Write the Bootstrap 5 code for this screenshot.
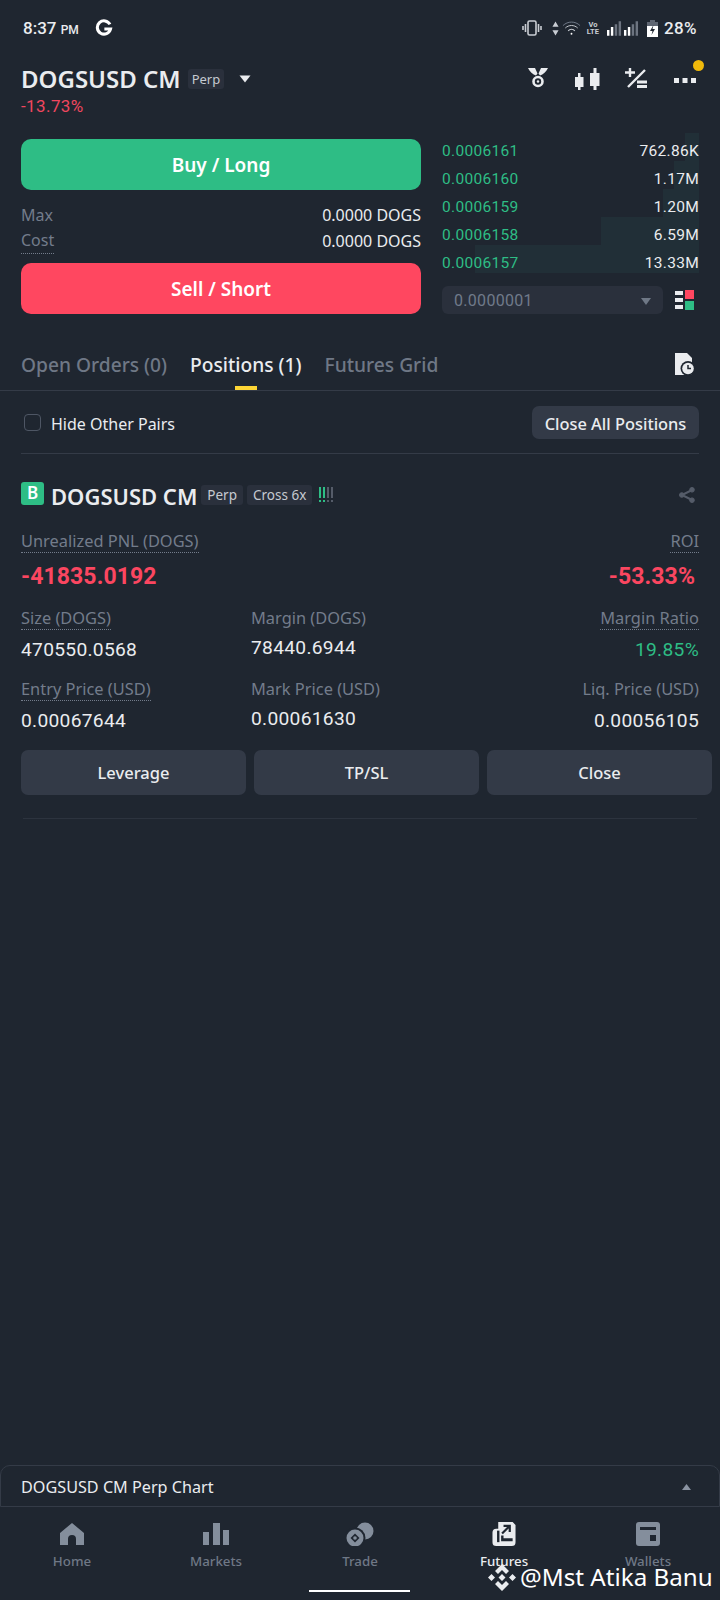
<!DOCTYPE html>
<html lang="en">
<head>
  <meta charset="UTF-8">
  <title>DOGSUSD CM Perp</title>
  <link href="https://cdn.jsdelivr.net/npm/bootstrap@5.3.3/dist/css/bootstrap.min.css" rel="stylesheet">
  <style>
    html, body { background: #1f2630; }
    body { font-family: "Noto Sans", sans-serif; color: #eaecef; }
    .app { width: 720px; height: 1600px; overflow: hidden; position: relative; background: #1f2630; }
    .num { font-family: Roboto, sans-serif; letter-spacing: .3px; }
    .txt-green { color: #2ebd85; }
    .txt-red { color: #fb4660; }
    .txt-grey { color: #737c8b; }

    .status-row { height: 56px; padding: 0 23px; }
    .clock { font: 500 17px Roboto, sans-serif; }
    .clock small { font-size: 12px; }
    .battery-pct { font: 500 17px Roboto, sans-serif; letter-spacing: .4px; margin-left: 6px; }
    .volte { font: 700 7.5px/7px Roboto, sans-serif; color: #c9cdd3; text-align: center; margin-left: 6px; }
    .gap-arrows { margin-left: 10px; }
    .gap-wifi { margin-left: 3px; }
    .gap-bars { margin-left: 8px; }

    .head-row { height: 83px; padding: 10px 24px 0 21px; }
    .pair-title { font: 600 24px/26px "Noto Sans", sans-serif; color: #eaecef; }
    .tag-chip { background: #2a303c; color: #c6cad1; border-radius: 3px; font-size: 13.5px; line-height: 20px; padding: 0 6px; }
    .head-chip { font-size: 13px; padding: 0 4px; margin-left: 7px; }
    .head-caret { margin-left: 15px; }
    .pct-line { font: 400 17px/20px Roboto, sans-serif; color: #f0465f; letter-spacing: .4px; margin-top: 4px; }
    .head-icons { padding-top: 2px; }
    .gap-candle { margin-left: 27px; }
    .gap-pct { margin-left: 25px; }
    .dot-wrap { position: relative; margin-left: 27px; margin-top: 10px; }
    .notif { position: absolute; top: -18px; right: -8px; width: 11px; height: 11px; border-radius: 50%; background: #f0b90b; }

    .trade-wrap { padding: 0 21px; gap: 21px; height: 175px; }
    .left-col { width: 400px; }
    .right-col { width: 257px; margin-top: -6px; }
    .big-btn { height: 51px; border: 0; border-radius: 10px; color: #fff; font: 600 19px/53px "Noto Sans", sans-serif; padding: 0; width: 100%; }
    .big-btn.buy-btn, .big-btn.buy-btn:hover { background: #2ebd85; color: #fff; }
    .big-btn.sell-btn, .big-btn.sell-btn:hover { background: #ff4760; color: #fff; }
    .max-row { height: 26px; font-size: 16px; }
    .max-rows { padding: 12px 0 9px; }
    .under-dots { border-bottom: 1px dotted #737c8b; padding-bottom: 1px; }
    .book-line { height: 28px; padding-top: 9px; font-size: 15.5px; background-image: linear-gradient(#212f37, #212f37); background-repeat: no-repeat; background-position: right top; }
    .step-row { margin-top: 13px; }
    .step-select { width: 221px; height: 28px; background: #2a303c; border-radius: 6px; padding: 2px 12px 0; font-size: 16px; color: #707a8a; }

    .tab-row { height: 77px; padding: 26px 21px 0; border-bottom: 1px solid #343b47; gap: 23px; }
    .tab-item { font: 500 19.2px/50px "Noto Sans", sans-serif; color: #6f7886; height: 50px; position: relative; white-space: nowrap; }
    .tab-item.on { color: #eaecef; }
    .tab-item.on::after { content: ""; position: absolute; left: 45px; bottom: 0; width: 22px; height: 4px; background: #fcd535; }
    .hist-icon { margin: 13px 4px 0 auto; }

    .filter-row { height: 63px; margin: 0 21px; border-bottom: 1px solid #343b47; }
    .form-check-input.dark-check { width: 17px; height: 17px; margin: 0 0 0 3px; background-color: transparent; border: 1px solid #4e5664; border-radius: 4px; }
    .filter-label { font-size: 16px; margin: 3px 0 0 10px; color: #eaecef; }
    .small-btn, .small-btn:hover { background: #333a47; color: #eaecef; border: 0; border-radius: 7px; height: 33px; width: 167px; padding: 0; font: 500 16.4px/36px "Noto Sans", sans-serif; }

    .pos-wrap { padding: 28px 21px 0; }
    .pos-head { height: 26px; }
    .b-mark { width: 23px; height: 23px; border-radius: 3px; background: #2ebd85; color: #fff; font: 600 17px/21px "Noto Sans", sans-serif; text-align: center; margin-top: -3px; }
    .pos-title { font: 600 22px/26px "Noto Sans", sans-serif; margin: 1px 0 0 7px; }
    .pos-chip { margin: 0 0 0 4px; font-size: 13.5px; }
    .pos-bars { margin-left: 7px; }
    .stat-grid { display: grid; grid-template-columns: 230px 1fr auto; }
    .stat-a { margin-top: 22px; }
    .stat-b { margin-top: 16px; }
    .stat-c { margin-top: 16px; }
    .stat-label { font-size: 16.4px; line-height: 21px; color: #737c8b; display: block; width: fit-content; }
    .text-end .stat-label { margin-left: auto; }
    .blank-line { border-bottom: 1px solid transparent; padding-bottom: 1px; }
    .stat-val { font: 400 19.2px/24px Roboto, sans-serif; letter-spacing: .3px; margin-top: 8px; }
    .stat-big { font: 700 23px/28px Roboto, sans-serif; margin-top: 10px; letter-spacing: .1px; }
    .act-row { gap: 8px; margin-top: 17px; width: 691px; }
    .act-btn, .act-btn:hover { width: 225px; flex: none; height: 45px; background: #333a47; color: #eaecef; border: 0; border-radius: 7px; font: 500 16.5px/45px "Noto Sans", sans-serif; padding: 0; }
    .pos-end { border-top: 1px solid #2c333e; margin: 23px 2px 0; }

    .chart-bar { height: 42px; margin-top: auto; border: 1px solid #343b47; border-radius: 10px 10px 0 0; padding: 2px 28px 0 20px; font-size: 16.2px; color: #eaecef; }
    .tab-bar { height: 93px; display: grid; grid-template-columns: repeat(5, 144px); padding-top: 15px; position: relative; }
    .nav-cell { font-size: 13.3px; font-weight: 500; color: #6f7886; line-height: 18px; }
    .nav-cell.on { color: #eaecef; }
    .nav-cell svg { display: block; margin-bottom: 6px; }
    .home-line { position: absolute; left: 309px; top: 83px; width: 101px; height: 2px; background: #fff; }
    .wmark { position: absolute; left: 488px; top: 1562px; font: 400 24.2px/30px "Noto Sans", sans-serif; color: #fff; white-space: nowrap; gap: 4px; }
  </style>
</head>
<body>
<div class="app d-flex flex-column">

  <!-- status bar -->
  <div class="status-row d-flex align-items-center justify-content-between">
    <div class="d-flex align-items-center">
      <span class="clock">8:37 <small>PM</small></span>
      <svg class="ms-3" width="18" height="18" viewBox="0 0 20 20"><path d="M16.600 6A7.400 7.400 0 1 0 17.200 11.200H10.400" fill="none" stroke="#fff" stroke-width="3.400"/></svg>
    </div>
    <div class="d-flex align-items-center">
      <svg width="20" height="16" viewBox="0 0 20 16" fill="none" stroke="#c9cdd3"><rect x="6" y="1" width="8" height="14" rx="1.500" stroke-width="1.600"/><path d="M3.500 4v8M1 6v4M16.500 4v8M19 6v4" stroke-width="1.600"/></svg>
      <svg class="gap-arrows" width="7" height="15" viewBox="0 0 8 16" fill="#c9cdd3"><path d="M4 0l3.500 6h-7zM4 16L.5 10h7z"/></svg>
      <svg class="gap-wifi" width="19" height="16" viewBox="0 0 20 16" fill="none" stroke="#c9cdd3" stroke-width="1"><path d="M1 5.500c5-5 13-5 18 0" stroke="#737c8b"/><path d="M3.500 8c3.500-3.500 9.500-3.500 13 0"/><path d="M6.500 11c2-2 5-2 7 0" stroke-width="1.300"/><circle cx="10" cy="14" r="1" fill="#fff" stroke="none"/></svg>
      <div class="volte"><div>Vo</div><div>LTE</div></div>
      <svg class="gap-bars" width="32" height="15" viewBox="0 0 33 15"><path d="M0 9h2.500v6H0zM4 6h2.500v9H4z" fill="#fff"/><path d="M8 3h2.500v12H8zM12 0h2.500v15H12z" fill="#6d7480"/><path d="M17.500 9H20v6h-2.500zM21.500 6H24v9h-2.500z" fill="#fff"/><path d="M25.500 3H28v12h-2.500zM29.500 0H32v15h-2.500z" fill="#6d7480"/></svg>
      <svg class="gap-bars" width="11" height="17" viewBox="0 0 11 17"><path d="M3 0h5v2h3v5H0V2h3z" fill="#5f6672"/><path d="M0 6h11v11H0z" fill="#fff"/><path d="M6.500 5L3 11h2.500L4.500 15 8 9H5.500z" fill="#1f2630"/></svg>
      <span class="battery-pct">28%</span>
    </div>
  </div>

  <!-- market header -->
  <div class="head-row d-flex justify-content-between">
    <div>
      <div class="d-flex align-items-center">
        <span class="pair-title">DOGSUSD CM</span>
        <span class="tag-chip head-chip">Perp</span>
        <svg class="head-caret" width="12" height="8" viewBox="0 0 12 8"><path d="M.5.500h11L6 7.500z" fill="#eaecef"/></svg>
      </div>
      <div class="pct-line">-13.73%</div>
    </div>
    <div class="head-icons d-flex align-items-start">
      <svg width="20" height="20" viewBox="0 0 20 20"><path d="M0 0h7l2.500 5.500-1.500 2C5 6.500 1.500 3.500 0 0zM20 0h-7l-2.500 5.500 1.500 2c3-1 6.500-4 8-7.500z" fill="#eaecef"/><circle cx="10" cy="13.500" r="4.500" fill="none" stroke="#eaecef" stroke-width="2.600"/><circle cx="10" cy="13.500" r="1.200" fill="#eaecef"/></svg>
      <svg class="gap-candle" width="25" height="23" viewBox="0 0 25 23" fill="#eaecef"><path d="M0 9h8.500v10H0zM3 5h2.500v17H3zM15 5h9.500v13H15zM18.500 0h3v22h-3z"/></svg>
      <svg class="gap-pct" width="22" height="21" viewBox="0 0 22 21" fill="none" stroke="#eaecef" stroke-width="2.400"><path d="M0 4.500h10M5 0v9M20 2L3 19"/><path d="M12 14h10M12 18.500h10" stroke-width="2.800"/></svg>
      <div class="dot-wrap">
        <svg class="d-block" width="22" height="5" viewBox="0 0 22 5" fill="#eaecef"><path d="M0 0h5v5H0zM8.500 0h5v5h-5zM17 0h5v5h-5z"/></svg>
        <span class="notif"></span>
      </div>
    </div>
  </div>

  <!-- buy / sell and order book -->
  <div class="trade-wrap d-flex">
    <div class="left-col">
      <button class="btn big-btn buy-btn d-block">Buy / Long</button>
      <div class="max-rows">
        <div class="max-row d-flex justify-content-between align-items-center"><span class="txt-grey">Max</span><span>0.0000 DOGS</span></div>
        <div class="max-row d-flex justify-content-between align-items-center"><span class="txt-grey under-dots">Cost</span><span>0.0000 DOGS</span></div>
      </div>
      <button class="btn big-btn sell-btn d-block">Sell / Short</button>
    </div>
    <div class="right-col">
      <div class="book-line num d-flex justify-content-between align-items-center" style="background-size:14px 100%"><span class="txt-green">0.0006161</span><span>762.86K</span></div>
      <div class="book-line num d-flex justify-content-between align-items-center" style="background-size:25px 100%"><span class="txt-green">0.0006160</span><span>1.17M</span></div>
      <div class="book-line num d-flex justify-content-between align-items-center" style="background-size:36px 100%"><span class="txt-green">0.0006159</span><span>1.20M</span></div>
      <div class="book-line num d-flex justify-content-between align-items-center" style="background-size:98px 100%"><span class="txt-green">0.0006158</span><span>6.59M</span></div>
      <div class="book-line num d-flex justify-content-between align-items-center" style="background-size:224px 100%"><span class="txt-green">0.0006157</span><span>13.33M</span></div>
      <div class="step-row d-flex align-items-center justify-content-between">
        <div class="step-select num d-flex align-items-center justify-content-between">
          <span>0.0000001</span>
          <svg width="10" height="7" viewBox="0 0 10 7"><path d="M0 0h10L5 7z" fill="#6f7886"/></svg>
        </div>
        <svg class="me-1" width="20" height="20" viewBox="0 0 20 20"><path d="M0 1h8v4H0zM0 8h8v4H0zM0 15h8v4H0z" fill="#eaecef"/><path d="M10 0h9v9h-9z" fill="#ff4760"/><path d="M10 11h9v9h-9z" fill="#2ebd85"/></svg>
      </div>
    </div>
  </div>

  <!-- tabs -->
  <div class="tab-row d-flex align-items-start">
    <span class="tab-item">Open Orders (0)</span>
    <span class="tab-item on">Positions (1)</span>
    <span class="tab-item">Futures Grid</span>
    <svg class="hist-icon" width="20" height="23" viewBox="0 0 20 23"><path d="M0 0h12l5 5v17H0z" fill="#eaecef"/><circle cx="13" cy="15.500" r="7.500" fill="#1f2630"/><circle cx="13" cy="15.500" r="5.800" fill="#eaecef"/><path d="M13 12v3.500h3" fill="none" stroke="#1f2630" stroke-width="1.500"/></svg>
  </div>

  <!-- filter -->
  <div class="filter-row d-flex align-items-center justify-content-between">
    <div class="d-flex align-items-center">
      <input class="form-check-input dark-check" type="checkbox" id="hideOther">
      <label class="filter-label" for="hideOther">Hide Other Pairs</label>
    </div>
    <button class="btn small-btn">Close All Positions</button>
  </div>

  <!-- position card -->
  <div class="pos-wrap">
    <div class="pos-head d-flex align-items-center">
      <span class="b-mark">B</span>
      <span class="pos-title">DOGSUSD CM</span>
      <span class="tag-chip pos-chip">Perp</span>
      <span class="tag-chip pos-chip">Cross 6x</span>
      <svg class="pos-bars" width="15" height="16" viewBox="0 0 15 16"><path d="M0 0h2v11H0zM0 13h2v2H0zM4 0h2v11H4zM4 13h2v2H4z" fill="#2ebd85"/><path d="M8 0h2v11H8zM8 13h2v2H8zM12 0h2v11h-2zM12 13h2v2h-2z" fill="#555c69"/></svg>
      <svg class="ms-auto me-1" width="16" height="16" viewBox="0 0 16 16" fill="#555c69" stroke="#555c69"><path d="M13 3L3 8l10 5" fill="none" stroke-width="2"/><circle cx="13" cy="2.800" r="2.300"/><circle cx="2.800" cy="8" r="2.300"/><circle cx="13" cy="13.200" r="2.300"/></svg>
    </div>

    <div class="stat-grid stat-a">
      <div><span class="stat-label under-dots">Unrealized PNL (DOGS)</span><div class="stat-big txt-red">-41835.0192</div></div>
      <div></div>
      <div class="text-end"><span class="stat-label under-dots">ROI</span><div class="stat-big txt-red pe-1">-53.33%</div></div>
    </div>
    <div class="stat-grid stat-b">
      <div><span class="stat-label under-dots">Size (DOGS)</span><div class="stat-val">470550.0568</div></div>
      <div><span class="stat-label">Margin (DOGS)</span><div class="stat-val">78440.6944</div></div>
      <div class="text-end"><span class="stat-label under-dots">Margin Ratio</span><div class="stat-val txt-green">19.85%</div></div>
    </div>
    <div class="stat-grid stat-c">
      <div><span class="stat-label under-dots">Entry Price (USD)</span><div class="stat-val">0.00067644</div></div>
      <div><span class="stat-label">Mark Price (USD)</span><div class="stat-val">0.00061630</div></div>
      <div class="text-end"><span class="stat-label blank-line">Liq. Price (USD)</span><div class="stat-val">0.00056105</div></div>
    </div>

    <div class="act-row d-flex">
      <button class="btn act-btn">Leverage</button>
      <button class="btn act-btn">TP/SL</button>
      <button class="btn act-btn">Close</button>
    </div>
    <div class="pos-end"></div>
  </div>

  <!-- chart drawer -->
  <div class="chart-bar d-flex align-items-center justify-content-between">
    <span>DOGSUSD CM Perp Chart</span>
    <svg width="9" height="6" viewBox="0 0 9 6"><path d="M0 6h9L4.500 0z" fill="#8a93a1"/></svg>
  </div>

  <!-- bottom nav -->
  <div class="tab-bar">
    <div class="nav-cell d-flex flex-column align-items-center">
      <svg width="24" height="24" viewBox="0 0 24 24" fill="#848e9c"><path d="M12 1L0 11v12h8v-6a4 4 0 0 1 8 0v6h8V11z"/></svg>Home
    </div>
    <div class="nav-cell d-flex flex-column align-items-center">
      <svg width="26" height="24" viewBox="0 0 26 24" fill="#848e9c"><path d="M0 10h6v13H0zM10 1h7v22h-7zM20 8h6v15h-6z"/></svg>Markets
    </div>
    <div class="nav-cell d-flex flex-column align-items-center">
      <svg width="30" height="24" viewBox="0 0 30 24"><circle cx="20" cy="9" r="8.500" fill="#848e9c"/><circle cx="10" cy="16" r="10.500" fill="#1f2630"/><circle cx="10" cy="16" r="8.500" fill="#848e9c"/><path d="M10 11.500l4.500 4.500-4.500 4.500-4.500-4.500z" fill="#1f2630"/><circle cx="10" cy="16" r="1.800" fill="#848e9c"/></svg>Trade
    </div>
    <div class="nav-cell on d-flex flex-column align-items-center">
      <svg width="24" height="24" viewBox="0 0 24 25"><path d="M6 0h15l3 3v18a4 4 0 0 1-4 4H4a4 4 0 0 1-4-4V11a4 4 0 0 1 4-4h2z" fill="#eaecef"/><path d="M6 9v12" stroke="#1f2630" stroke-width="2.500"/><path d="M10 12l7-7M11.500 4h6.500v6.500" fill="none" stroke="#1f2630" stroke-width="2.300"/><path d="M9 14h2.500v3H21v3H9z" fill="#1f2630"/></svg>Futures
    </div>
    <div class="nav-cell d-flex flex-column align-items-center">
      <svg width="24" height="24" viewBox="0 0 24 24"><path d="M3 0h18a3 3 0 0 1 3 3v18a3 3 0 0 1-3 3H3a3 3 0 0 1-3-3V3a3 3 0 0 1 3-3z" fill="#848e9c"/><path d="M4 5h16v3H4z" fill="#1f2630"/><path d="M14 13h6v6h-6z" fill="#1f2630"/></svg>Wallets
    </div>
    <div class="home-line"></div>
  </div>

  <!-- watermark -->
  <div class="wmark d-flex align-items-center">
    <svg width="28" height="27" viewBox="0 0 28 27" fill="#eaecef"><path d="M14 0l7 7-3 3-4-4-4 4-3-3zM3.500 10l3.500 3.500L3.500 17 0 13.500zM24.500 10l3.500 3.500-3.500 3.500-3.500-3.500zM14 10l3.500 3.500L14 17l-3.500-3.500zM7 20l3-3 4 4 4-4 3 3-7 7z"/></svg>
    <span>@Mst Atika Banu</span>
  </div>
</div>
<script src="https://cdn.jsdelivr.net/npm/bootstrap@5.3.3/dist/js/bootstrap.bundle.min.js"></script>
</body>
</html>
